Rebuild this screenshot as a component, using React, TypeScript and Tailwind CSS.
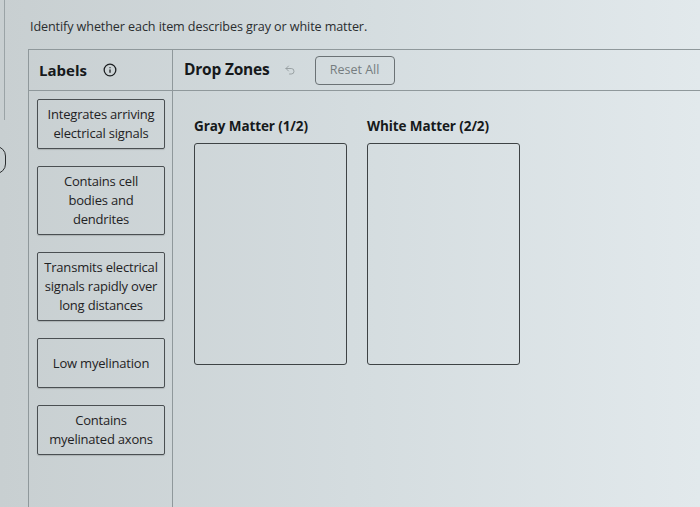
import { Info, Undo2 } from 'lucide-react';

const labels = [
  ['Integrates arriving', 'electrical signals'],
  ['Contains cell', 'bodies and', 'dendrites'],
  ['Transmits electrical', 'signals rapidly over', 'long distances'],
  ['Low myelination'],
  ['Contains', 'myelinated axons'],
];

const zones = ['Gray Matter (1/2)', 'White Matter (2/2)'];

export default function App() {
  return (
    <div
      className="w-[700px] h-[507px] overflow-hidden bg-gradient-to-r from-[#c8cfd1] via-[#d4dcdf] to-[#e2e9ec] text-[#1f2224] relative"
      style={{ fontFamily: '"Open Sans", Lato, sans-serif' }}
    >
      {/* partial element at the left edge */}
      <div className="absolute left-[-14px] top-[146px] w-[20px] h-[28px] rounded-full border border-[#2b2e30]" />
      <div className="absolute left-[4px] top-0 h-[120px] border-l border-[#9aa3a6]" />

      <p className="pt-[18px] pl-[30px] text-[12.6px] leading-[17px] text-[#2a2d2f] tracking-[-0.1px]">
        Identify whether each item describes gray or white matter.
      </p>

      <div className="mt-[14px] ml-[28px] h-[460px] border-t border-l border-[#8f989b] grid grid-cols-[144px_1fr]">
        {/* Labels column */}
        <div className="border-r border-[#8f989b] flex flex-col">
          <div className="h-[41px] border-b border-[#8f989b] flex items-center pl-[10px] gap-[16px]">
            <span className="text-[15px] font-bold text-[#16191b]">Labels</span>
            <Info size={14} strokeWidth={2.2} className="text-[#1c1f21]" />
          </div>
          <div className="flex flex-col gap-[17px] pt-[8px] pl-[8px]">
            {labels.map((lines) => (
              <div
                key={lines.join(' ')}
                className="w-[128px] min-h-[50px] px-[2px] py-[5px] flex flex-col items-center justify-center text-center text-[13px] font-medium leading-[19px] tracking-[-0.2px] border border-[#4a4f52] rounded-[2px] shadow-[0_1px_1px_rgba(0,0,0,0.15)]"
              >
                {lines.map((t) => (
                  <span key={t} className="whitespace-nowrap">{t}</span>
                ))}
              </div>
            ))}
          </div>
        </div>

        {/* Drop zones column */}
        <div className="flex flex-col">
          <div className="h-[41px] border-b border-[#8f989b] flex items-center pl-[11px]">
            <span className="text-[15.5px] font-bold text-[#16191b] tracking-[-0.2px]">Drop Zones</span>
            <Undo2 size={12} strokeWidth={1.6} className="ml-[14px] text-[#8b9396]" />
            <button className="ml-[19px] h-[29px] w-[80px] rounded-[4px] border border-[#6b7275] text-[12.5px] text-[#757d80]">
              Reset All
            </button>
          </div>
          <div className="flex gap-[20px] pl-[21px] pt-[26px]">
            {zones.map((z) => (
              <div key={z} className="flex flex-col">
                <span className="text-[13.5px] font-bold leading-[18px] text-[#16191b] tracking-[-0.1px]">{z}</span>
                <div className="mt-[8px] w-[153px] h-[222px] rounded-[3px] border border-[#3e4345]" />
              </div>
            ))}
          </div>
        </div>
      </div>
    </div>
  );
}
